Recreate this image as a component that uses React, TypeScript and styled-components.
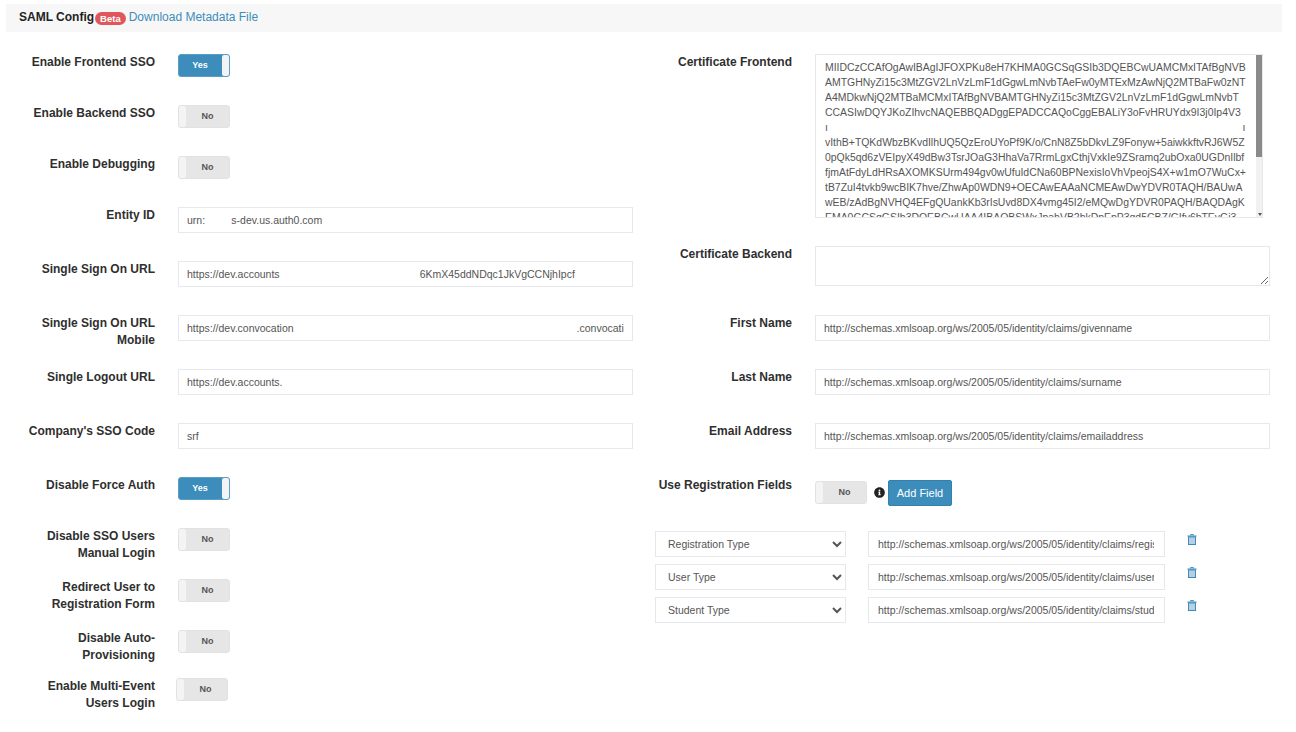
import React from "react";
import styled, { createGlobalStyle } from "styled-components";
import { FaInfoCircle } from "react-icons/fa";

const certificate = [
  "MIIDCzCCAfOgAwIBAgIJFOXPKu8eH7KHMA0GCSqGSIb3DQEBCwUAMCMxITAfBgNVB",
  "AMTGHNyZi15c3MtZGV2LnVzLmF1dGgwLmNvbTAeFw0yMTExMzAwNjQ2MTBaFw0zNT",
  "A4MDkwNjQ2MTBaMCMxITAfBgNVBAMTGHNyZi15c3MtZGV2LnVzLmF1dGgwLmNvbT",
  "CCASIwDQYJKoZIhvcNAQEBBQADggEPADCCAQoCggEBALiY3oFvHRUYdx9I3j0Ip4V3",
  "ı" + " ".repeat(143) + "ı",
  "vIthB+TQKdWbzBKvdIlhUQ5QzEroUYoPf9K/o/CnN8Z5bDkvLZ9Fonyw+5aiwkkftvRJ6W5Z",
  "0pQk5qd6zVEIpyX49dBw3TsrJOaG3HhaVa7RrmLgxCthjVxkIe9ZSramq2ubOxa0UGDnIlbf",
  "fjmAtFdyLdHRsAXOMKSUrm494gv0wUfuIdCNa60BPNexisIoVhVpeojS4X+w1mO7WuCx+",
  "tB7ZuI4tvkb9wcBIK7hve/ZhwAp0WDN9+OECAwEAAaNCMEAwDwYDVR0TAQH/BAUwA",
  "wEB/zAdBgNVHQ4EFgQUankKb3rIsUvd8DX4vmg45I2/eMQwDgYDVR0PAQH/BAQDAgK",
  "EMA0GCSqGSIb3DQEBCwUAA4IBAQBSWxJpahVB2hkDpEpP3qd5CBZ/GIfy6bTEyGi3",
].join("\n");

type ToggleRow = { label: React.ReactNode; on?: boolean; height: number; nudge?: boolean };

const GlobalStyle = createGlobalStyle`
  html, body {
    margin: 0;
    background: #fff;
  }
  body {
    font-family: "Liberation Sans", Arial, sans-serif;
    font-size: 12px;
    color: #333;
  }
`;

const Page = styled.div`
  width: 1296px;
  height: 732px;
  overflow: hidden;
  padding: 4px 14px 0 6px;
  box-sizing: border-box;
`;

const Header = styled.div`
  height: 28px;
  background: #f7f7f7;
  display: flex;
  align-items: center;
  padding-left: 13px;
  padding-bottom: 2px;
  box-sizing: border-box;
  font-size: 12px;
`;

const Title = styled.span`
  font-weight: 700;
  color: #222;
`;

const Badge = styled.span`
  background: #e0575b;
  color: #fff;
  font-size: 9.5px;
  font-weight: 700;
  line-height: 13px;
  padding: 0 5px;
  border-radius: 7px;
  margin: 2px 3px 0 1px;
`;

const MetaLink = styled.a`
  color: #3c8dbc;
  text-decoration: none;
  font-size: 12px;
`;

const Columns = styled.div`
  display: flex;
  padding-top: 22px;
`;

const LeftColumn = styled.div`
  width: 637px;
  flex: none;
  padding-right: 10px;
  box-sizing: border-box;
`;

const RightColumn = styled.div`
  flex: 1;
  min-width: 0;
  padding-right: 12px;
`;

const Row = styled.div<{ $height: number }>`
  height: ${(p) => p.$height}px;
  display: grid;
  grid-template-columns: 149px 1fr;
  column-gap: 23px;
  align-items: start;
`;

const Label = styled.label`
  display: block;
  text-align: right;
  font-size: 12px;
  font-weight: 700;
  line-height: 17px;
  color: #2f2f2f;
`;

const Toggle = styled.div<{ $on?: boolean; $nudge?: boolean }>`
  width: 52px;
  height: 23px;
  box-sizing: border-box;
  border: 1px solid ${(p) => (p.$on ? "#5a9dc6" : "#e2e2e2")};
  border-radius: 3px;
  background: ${(p) => (p.$on ? "#3c8dbc" : "#e6e6e6")};
  display: flex;
  flex-direction: ${(p) => (p.$on ? "row" : "row-reverse")};
  align-items: center;
  margin-left: ${(p) => (p.$nudge ? "-2px" : "0")};
`;

const ToggleText = styled.span<{ $on?: boolean }>`
  flex: 1;
  text-align: center;
  font-size: 9px;
  font-weight: 700;
  padding-right: ${(p) => (p.$on ? "1px" : "0")};
  padding-bottom: 1px;
  color: ${(p) => (p.$on ? "#fff" : "#555")};
`;

const ToggleHandle = styled.span`
  width: 7px;
  height: 100%;
  background: #f4f4f4;
  border-radius: 2px;
`;

const TextInput = styled.input`
  width: 100%;
  height: 26px;
  box-sizing: border-box;
  border: 1.5px solid #e7e7ee;
  background: #fff;
  padding: 0 8px;
  font-family: "Liberation Sans", Arial, sans-serif;
  font-size: 10.5px;
  color: #555;
  outline: none;
`;

const CertWrap = styled.div`
  position: relative;
  width: 448px;
  height: 164px;
`;

const CertArea = styled.textarea`
  display: block;
  width: 100%;
  height: 100%;
  box-sizing: border-box;
  border: 1.5px solid #e7e7ee;
  padding: 5px 8px 5px 9px;
  margin: 0;
  resize: none;
  overflow: hidden;
  white-space: pre;
  font-family: "Liberation Sans", Arial, sans-serif;
  font-size: 10.45px;
  line-height: 15px;
  color: #555;
  outline: none;
`;

const ScrollTrack = styled.div`
  position: absolute;
  top: 1px;
  right: 1px;
  bottom: 1px;
  width: 6px;
  background: #f1f1f1;
`;

const ScrollThumb = styled.div`
  height: 102px;
  background: #8a8a8a;
`;

const ScrollArrow = styled.div`
  position: absolute;
  right: 1px;
  bottom: 2px;
  border-left: 2px solid transparent;
  border-right: 2px solid transparent;
  border-top: 3px solid #555;
`;

const BackendArea = styled.textarea`
  display: block;
  width: 100%;
  height: 40px;
  box-sizing: border-box;
  border: 1.5px solid #e7e7ee;
  margin: 0;
  outline: none;
`;

const ToggleLine = styled.div`
  display: flex;
  align-items: flex-start;
  padding-top: 4px;
`;

const InfoIcon = styled(FaInfoCircle)`
  width: 11px;
  height: 11px;
  margin: 6px 3px 0 7px;
  color: #222;
  flex: none;
`;

const AddButton = styled.button`
  height: 26px;
  width: 64px;
  margin-top: -1px;
  border: 1px solid #367fa9;
  border-radius: 2px;
  background: #3c8dbc;
  color: #fff;
  font-family: "Liberation Sans", Arial, sans-serif;
  font-size: 11px;
  padding: 0;
`;

const FieldList = styled.div`
  display: flex;
  flex-direction: column;
  gap: 7px;
  margin-left: 12px;
`;

const FieldRow = styled.div`
  display: flex;
  align-items: flex-start;
`;

const FieldSelect = styled.select`
  width: 191px;
  height: 26px;
  box-sizing: border-box;
  border: 1.5px solid #e7e7ee;
  background: #fff;
  padding: 0 8px;
  font-family: "Liberation Sans", Arial, sans-serif;
  font-size: 10.5px;
  color: #555;
  border-radius: 0;
  outline: none;
`;

const FieldInput = styled(TextInput)`
  width: 297px;
  margin-left: 22px;
  padding: 0 10px 0 9px;
`;

const TrashSvg = styled.svg`
  width: 10px;
  height: 11px;
  margin: 3px 0 0 22px;
  flex: none;
`;

const leftTop: ToggleRow[] = [
  { label: "Enable Frontend SSO", on: true, height: 51 },
  { label: "Enable Backend SSO", height: 51 },
  { label: "Enable Debugging", height: 51 },
];

const leftInputs: { label: React.ReactNode; value: string }[] = [
  { label: "Entity ID", value: "urn:" + " ".repeat(9) + "s-dev.us.auth0.com" },
  { label: "Single Sign On URL", value: "https://dev.accounts" + " ".repeat(48) + "6KmX45ddNDqc1JkVgCCNjhIpcf" },
  { label: <>Single Sign On URL<br />Mobile</>, value: "https://dev.convocation" + " ".repeat(97) + ".convocation" },
  { label: "Single Logout URL", value: "https://dev.accounts." },
  { label: "Company's SSO Code", value: "srf" },
];

const leftBottom: ToggleRow[] = [
  { label: "Disable Force Auth", on: true, height: 51 },
  { label: <>Disable SSO Users<br />Manual Login</>, height: 51 },
  { label: <>Redirect User to<br />Registration Form</>, height: 51 },
  { label: <>Disable Auto-<br />Provisioning</>, height: 48 },
  { label: <>Enable Multi-Event<br />Users Login</>, height: 51, nudge: true },
];

const claims = [
  { label: "First Name", value: "http://schemas.xmlsoap.org/ws/2005/05/identity/claims/givenname" },
  { label: "Last Name", value: "http://schemas.xmlsoap.org/ws/2005/05/identity/claims/surname" },
  { label: "Email Address", value: "http://schemas.xmlsoap.org/ws/2005/05/identity/claims/emailaddress" },
];

const fields = [
  { type: "Registration Type", value: "http://schemas.xmlsoap.org/ws/2005/05/identity/claims/registrationtype" },
  { type: "User Type", value: "http://schemas.xmlsoap.org/ws/2005/05/identity/claims/usertype" },
  { type: "Student Type", value: "http://schemas.xmlsoap.org/ws/2005/05/identity/claims/studenttype" },
];

function SwitchBox({ on, nudge }: { on?: boolean; nudge?: boolean }) {
  return (
    <Toggle $on={on} $nudge={nudge}>
      <ToggleText $on={on}>{on ? "Yes" : "No"}</ToggleText>
      <ToggleHandle />
    </Toggle>
  );
}

function TrashIcon() {
  return (
    <TrashSvg viewBox="0 0 10 11">
      <path d="M3.5 1.5V.6h3v.9" fill="none" stroke="#3c8dbc" strokeWidth="1" />
      <rect x="0.5" y="1.5" width="9" height="1.2" fill="#3c8dbc" />
      <rect x="1.5" y="3" width="7" height="7.5" fill="#b9cfe0" stroke="#3c8dbc" strokeWidth="1" />
    </TrashSvg>
  );
}

export default function App() {
  return (
    <Page>
      <GlobalStyle />
      <Header>
        <Title>SAML Config</Title>
        <Badge>Beta</Badge>
        <MetaLink href="#">Download Metadata File</MetaLink>
      </Header>
      <Columns>
        <LeftColumn>
          {leftTop.map((row, i) => (
            <Row key={i} $height={row.height}>
              <Label>{row.label}</Label>
              <SwitchBox on={row.on} />
            </Row>
          ))}
          {leftInputs.map((row, i) => (
            <Row key={i} $height={54}>
              <Label>{row.label}</Label>
              <TextInput readOnly value={row.value} />
            </Row>
          ))}
          {leftBottom.map((row, i) => (
            <Row key={i} $height={row.height}>
              <Label>{row.label}</Label>
              <SwitchBox on={row.on} nudge={row.nudge} />
            </Row>
          ))}
        </LeftColumn>
        <RightColumn>
          <Row $height={192}>
            <Label>Certificate Frontend</Label>
            <CertWrap>
              <CertArea readOnly value={certificate} />
              <ScrollTrack>
                <ScrollThumb />
              </ScrollTrack>
              <ScrollArrow />
            </CertWrap>
          </Row>
          <Row $height={69}>
            <Label>Certificate Backend</Label>
            <BackendArea />
          </Row>
          {claims.map((row) => (
            <Row key={row.label} $height={54}>
              <Label>{row.label}</Label>
              <TextInput readOnly value={row.value} />
            </Row>
          ))}
          <Row $height={54}>
            <Label>Use Registration Fields</Label>
            <ToggleLine>
              <SwitchBox />
              <InfoIcon />
              <AddButton>Add Field</AddButton>
            </ToggleLine>
          </Row>
          <FieldList>
            {fields.map((f) => (
              <FieldRow key={f.type}>
                <FieldSelect defaultValue={f.type}>
                  <option>{f.type}</option>
                </FieldSelect>
                <FieldInput readOnly value={f.value} />
                <TrashIcon />
              </FieldRow>
            ))}
          </FieldList>
        </RightColumn>
      </Columns>
    </Page>
  );
}
